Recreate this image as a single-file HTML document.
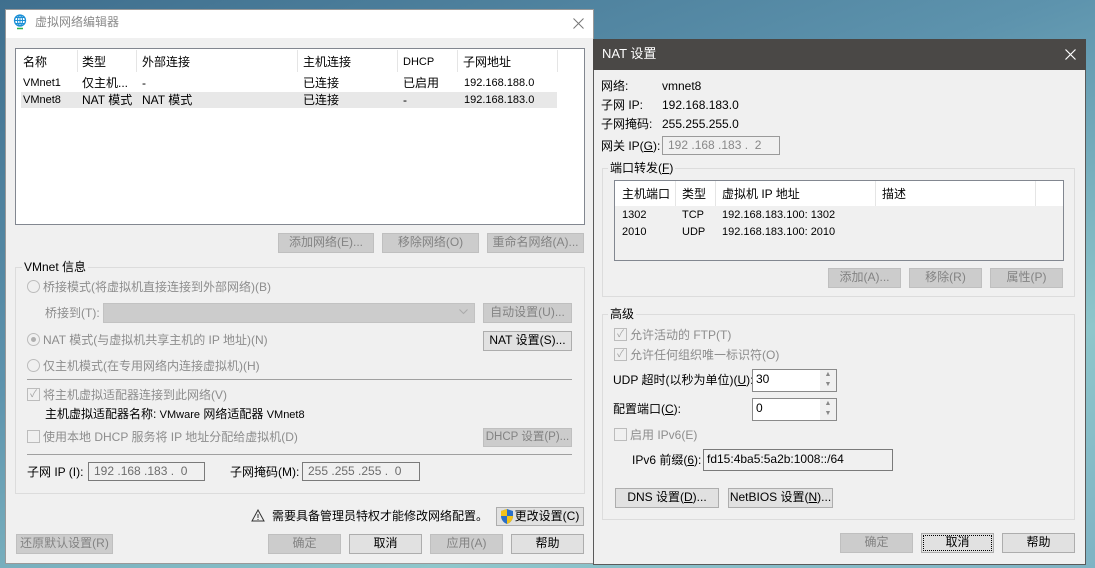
<!DOCTYPE html>
<html><head><meta charset="utf-8"><style>
*{box-sizing:border-box;margin:0;padding:0}
body{width:1095px;height:568px;overflow:hidden;position:relative;font-family:"Liberation Sans","Noto Sans CJK SC",sans-serif;font-size:12px;color:#000;
background:linear-gradient(160deg,#3f6f8e 0%,#5d93ad 40%,#8ec6cb 75%,#7fb3c4 100%)}
.a{position:absolute;white-space:nowrap;line-height:14px}
.dlg{position:absolute;background:#f0f0f0}
.btn{position:absolute;background:#e1e1e1;border:1px solid #adadad;text-align:center;line-height:17px;white-space:nowrap;overflow:hidden}
.dis{background:#cccccc;border-color:#bfbfbf;color:#838383}
.g{color:#8d8d8d}
.box{position:absolute;border:1px solid #dcdcdc}
.inp{position:absolute;border:1px solid #7a7a7a;background:#f0f0f0;color:#6d6d6d;padding-left:5px;line-height:16px;white-space:nowrap}
.sep{position:absolute;height:1px;background:#a0a0a0}
.rad{position:absolute;width:13px;height:13px;border:1px solid #bcbcbc;border-radius:50%;background:#f0f0f0}
.chk{position:absolute;width:13px;height:13px;border:1px solid #bcbcbc;background:#f0f0f0;color:#a0a0a0;font-size:10px;line-height:11px;text-align:center}
.lbl{position:absolute;background:#f0f0f0;padding:0 2px;line-height:14px;white-space:nowrap}
.x{position:absolute}
</style></head><body>

<!-- left dialog -->
<div class="dlg" style="left:5px;top:9px;width:589px;height:555px;border:1px solid #999"></div>
<div class="a" style="left:6px;top:10px;width:587px;height:28px;background:#fff"></div>
<svg class="a" style="left:13px;top:14px" width="14" height="16" viewBox="0 0 14 16"><circle cx="7" cy="6.5" r="5.5" fill="none" stroke="#1a8fd6" stroke-width="1.3"/><path d="M1.5 6.5h11M7 1v11M3 3.5h8M3 9.5h8" stroke="#1a8fd6" stroke-width="1"/><ellipse cx="7" cy="6.5" rx="2.5" ry="5.5" fill="none" stroke="#1a8fd6"/><path d="M4 14.5h6" stroke="#2bb24c" stroke-width="1.5"/></svg>
<div class="a" style="left:35px;top:15px;color:#8a8a8a;font-size:12px">虚拟网络编辑器</div>
<svg class="x" style="left:573px;top:18px" width="11" height="11" viewBox="0 0 11 11"><path d="M0.5 0.5l10 10M10.5 0.5l-10 10" stroke="#777" stroke-width="1"/></svg>

<div class="a" style="left:15px;top:48px;width:570px;height:177px;background:#fff;border:1px solid #828790"></div>
<div class="a" style="left:21px;top:92px;width:536px;height:16px;background:#e8e8e8"></div>
<div class="a" style="left:77px;top:50px;width:1px;height:22px;background:#e5e5e5"></div>
<div class="a" style="left:136px;top:50px;width:1px;height:22px;background:#e5e5e5"></div>
<div class="a" style="left:297px;top:50px;width:1px;height:22px;background:#e5e5e5"></div>
<div class="a" style="left:397px;top:50px;width:1px;height:22px;background:#e5e5e5"></div>
<div class="a" style="left:457px;top:50px;width:1px;height:22px;background:#e5e5e5"></div>
<div class="a" style="left:557px;top:50px;width:1px;height:22px;background:#e5e5e5"></div>
<div class="a" style="left:23px;top:55px">名称</div><div class="a" style="left:82px;top:55px">类型</div><div class="a" style="left:142px;top:55px">外部连接</div><div class="a" style="left:303px;top:55px">主机连接</div><div class="a" style="left:403px;top:55px;font-size:11px">DHCP</div><div class="a" style="left:463px;top:55px">子网地址</div>
<div class="a" style="left:23px;top:76px;font-size:11px">VMnet1</div><div class="a" style="left:82px;top:76px">仅主机...</div><div class="a" style="left:142px;top:76px">-</div><div class="a" style="left:303px;top:76px">已连接</div><div class="a" style="left:403px;top:76px">已启用</div><div class="a" style="left:464px;top:76px;font-size:11px">192.168.188.0</div>
<div class="a" style="left:23px;top:93px;font-size:11px">VMnet8</div><div class="a" style="left:82px;top:93px">NAT 模式</div><div class="a" style="left:142px;top:93px">NAT 模式</div><div class="a" style="left:303px;top:93px">已连接</div><div class="a" style="left:403px;top:93px">-</div><div class="a" style="left:464px;top:93px;font-size:11px">192.168.183.0</div>

<div class="btn dis" style="left:278px;top:233px;width:96px;height:20px">添加网络(E)...</div>
<div class="btn dis" style="left:382px;top:233px;width:97px;height:20px">移除网络(O)</div>
<div class="btn dis" style="left:487px;top:233px;width:97px;height:20px">重命名网络(A)...</div>

<div class="box" style="left:15px;top:267px;width:570px;height:227px"></div>
<div class="lbl" style="left:22px;top:260px">VMnet 信息</div>
<div class="rad" style="left:27px;top:280px"></div><div class="a g" style="left:43px;top:280px">桥接模式(将虚拟机直接连接到外部网络)(B)</div>
<div class="a g" style="left:45px;top:306px">桥接到(T):</div>
<div class="a" style="left:103px;top:303px;width:372px;height:20px;background:#ccc;border:1px solid #c2c2c2"></div>
<svg class="x" style="left:459px;top:309px" width="9" height="6" viewBox="0 0 9 6"><path d="M0.5 0.5l4 4 4-4" fill="none" stroke="#aaa"/></svg>
<div class="btn dis" style="left:483px;top:303px;width:89px;height:20px">自动设置(U)...</div>
<div class="rad" style="left:27px;top:333px"><div style="position:absolute;left:3px;top:3px;width:5px;height:5px;border-radius:50%;background:#b0b0b0"></div></div><div class="a g" style="left:43px;top:333px">NAT 模式(与虚拟机共享主机的 IP 地址)(N)</div>
<div class="btn" style="left:483px;top:331px;width:89px;height:20px">NAT 设置(S)...</div>
<div class="rad" style="left:27px;top:359px"></div><div class="a g" style="left:43px;top:359px">仅主机模式(在专用网络内连接虚拟机)(H)</div>
<div class="sep" style="left:27px;top:379px;width:545px"></div>
<div class="chk" style="left:27px;top:388px">✓</div><div class="a g" style="left:43px;top:388px">将主机虚拟适配器连接到此网络(V)</div>
<div class="a" style="left:45px;top:407px">主机虚拟适配器名称: <span style="font-size:11px">VMware</span> 网络适配器 <span style="font-size:11px">VMnet8</span></div>
<div class="chk" style="left:27px;top:430px"></div><div class="a g" style="left:43px;top:430px">使用本地 DHCP 服务将 IP 地址分配给虚拟机(D)</div>
<div class="btn dis" style="left:483px;top:428px;width:89px;height:19px;font-size:11.5px">DHCP 设置(P)...</div>
<div class="sep" style="left:27px;top:454px;width:545px"></div>
<div class="a" style="left:27px;top:465px">子网 IP (I):</div>
<div class="inp" style="left:88px;top:462px;width:117px;height:19px">192 .168 .183 .&nbsp; 0</div>
<div class="a" style="left:230px;top:465px">子网掩码(M):</div>
<div class="inp" style="left:302px;top:462px;width:118px;height:19px">255 .255 .255 .&nbsp; 0</div>

<svg class="x" style="left:251px;top:509px" width="14" height="13" viewBox="0 0 14 13"><path d="M7 1L1 12h12z" fill="none" stroke="#333" stroke-width="1"/><path d="M7 5v4M7 10v1" stroke="#333"/></svg>
<div class="a" style="left:272px;top:509px">需要具备管理员特权才能修改网络配置。</div>
<div class="btn" style="left:496px;top:507px;width:88px;height:19px;padding-left:14px">更改设置(C)</div>
<svg class="a" style="left:500px;top:508px" width="14" height="17" viewBox="0 0 14 17"><path d="M7 1L1 3v5c0 4 3 7 6 8 3-1 6-4 6-8V3z" fill="#2b6fc7"/><path d="M7 1v7H1V3zM7 8h6c0 4-3 7-6 8z" fill="#f3c21b"/></svg>

<div class="btn dis" style="left:16px;top:534px;width:97px;height:20px">还原默认设置(R)</div>
<div class="btn dis" style="left:268px;top:534px;width:73px;height:20px">确定</div>
<div class="btn" style="left:349px;top:534px;width:73px;height:20px">取消</div>
<div class="btn dis" style="left:430px;top:534px;width:73px;height:20px">应用(A)</div>
<div class="btn" style="left:511px;top:534px;width:73px;height:20px">帮助</div>

<!-- right dialog -->
<div class="dlg" style="left:593px;top:39px;width:493px;height:526px;border:1px solid #5a5a5a"></div>
<div class="a" style="left:593px;top:39px;width:493px;height:31px;background:#4a4846"></div>
<div class="a" style="left:602px;top:47px;color:#fff;font-size:13px">NAT 设置</div>
<svg class="x" style="left:1065px;top:49px" width="11" height="11" viewBox="0 0 11 11"><path d="M0.5 0.5l10 10M10.5 0.5l-10 10" stroke="#fff" stroke-width="1.2"/></svg>

<div class="a" style="left:601px;top:79px">网络:</div><div class="a" style="left:662px;top:79px">vmnet8</div>
<div class="a" style="left:601px;top:98px">子网 IP:</div><div class="a" style="left:662px;top:98px">192.168.183.0</div>
<div class="a" style="left:601px;top:117px">子网掩码:</div><div class="a" style="left:662px;top:117px">255.255.255.0</div>
<div class="a" style="left:601px;top:139px">网关 IP(<u>G</u>):</div>
<div class="inp" style="left:662px;top:136px;width:118px;height:19px;border-color:#9a9a9a;color:#888">192 .168 .183 .&nbsp; 2</div>

<div class="box" style="left:602px;top:168px;width:473px;height:129px"></div>
<div class="lbl" style="left:608px;top:161px">端口转发(<u>F</u>)</div>
<div class="a" style="left:614px;top:180px;width:450px;height:81px;background:#f0f0f0;border:1px solid #828790"></div>
<div class="a" style="left:615px;top:181px;width:448px;height:25px;background:#fff"></div>
<div class="a" style="left:675px;top:181px;width:1px;height:25px;background:#e5e5e5"></div>
<div class="a" style="left:715px;top:181px;width:1px;height:25px;background:#e5e5e5"></div>
<div class="a" style="left:875px;top:181px;width:1px;height:25px;background:#e5e5e5"></div>
<div class="a" style="left:1035px;top:181px;width:1px;height:25px;background:#e5e5e5"></div>
<div class="a" style="left:622px;top:187px">主机端口</div><div class="a" style="left:682px;top:187px">类型</div><div class="a" style="left:722px;top:187px">虚拟机 IP 地址</div><div class="a" style="left:882px;top:187px">描述</div>
<div class="a" style="left:622px;top:208px;font-size:11px">1302</div><div class="a" style="left:682px;top:208px;font-size:11px">TCP</div><div class="a" style="left:722px;top:208px;font-size:11px">192.168.183.100: 1302</div>
<div class="a" style="left:622px;top:225px;font-size:11px">2010</div><div class="a" style="left:682px;top:225px;font-size:11px">UDP</div><div class="a" style="left:722px;top:225px;font-size:11px">192.168.183.100: 2010</div>
<div class="btn dis" style="left:828px;top:268px;width:73px;height:20px">添加(A)...</div>
<div class="btn dis" style="left:909px;top:268px;width:73px;height:20px">移除(R)</div>
<div class="btn dis" style="left:990px;top:268px;width:73px;height:20px">属性(P)</div>

<div class="box" style="left:602px;top:314px;width:473px;height:206px"></div>
<div class="lbl" style="left:608px;top:307px">高级</div>
<div class="chk" style="left:614px;top:328px">✓</div><div class="a g" style="left:630px;top:328px">允许活动的 FTP(T)</div>
<div class="chk" style="left:614px;top:348px">✓</div><div class="a g" style="left:630px;top:348px">允许任何组织唯一标识符(O)</div>
<div class="a" style="left:613px;top:373px">UDP 超时(以秒为单位)(<u>U</u>):</div>
<div class="a" style="left:752px;top:369px;width:85px;height:23px;border:1px solid #8a8a8a;background:#fff;padding:2px 3px">30</div>
<div class="a" style="left:820px;top:370px;width:16px;height:21px;background:#f0f0f0;font-size:7px;color:#888;text-align:center;line-height:10px">▲<br>▼</div>
<div class="a" style="left:613px;top:402px">配置端口(<u>C</u>):</div>
<div class="a" style="left:752px;top:398px;width:85px;height:23px;border:1px solid #8a8a8a;background:#fff;padding:2px 3px">0</div>
<div class="a" style="left:820px;top:399px;width:16px;height:21px;background:#f0f0f0;font-size:7px;color:#888;text-align:center;line-height:10px">▲<br>▼</div>
<div class="chk" style="left:614px;top:428px"></div><div class="a g" style="left:630px;top:428px">启用 IPv6(E)</div>
<div class="a" style="left:632px;top:453px">IPv6 前缀(<u>6</u>):</div>
<div class="a" style="left:703px;top:449px;width:190px;height:22px;border:1px solid #7a7a7a;background:#f0f0f0;padding:2px 3px">fd15:4ba5:5a2b:1008::/64</div>
<div class="btn" style="left:615px;top:488px;width:104px;height:20px">DNS 设置(<u>D</u>)...</div>
<div class="btn" style="left:728px;top:488px;width:105px;height:20px">NetBIOS 设置(<u>N</u>)...</div>

<div class="btn dis" style="left:840px;top:533px;width:73px;height:20px">确定</div>
<div class="btn" style="left:921px;top:533px;width:73px;height:20px;outline:1px dotted #000;outline-offset:-3px">取消</div>
<div class="btn" style="left:1002px;top:533px;width:73px;height:20px">帮助</div>
</body></html>
